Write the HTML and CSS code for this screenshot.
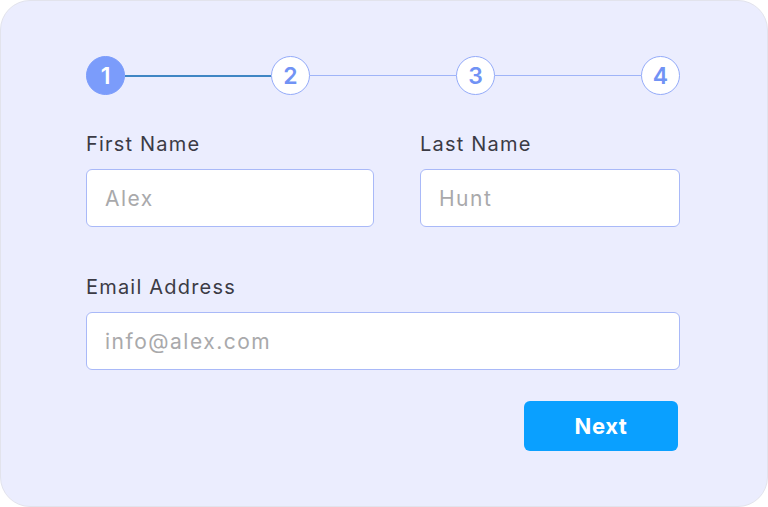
FILE: index.html
```html
<!DOCTYPE html>
<html>
<head>
<meta charset="utf-8">
<link rel="stylesheet" href="styles.css">
</head>
<body>
<div class="card">
  <div class="stepper">
    <div class="step active">1</div>
    <div class="line done"></div>
    <div class="step">2</div>
    <div class="line"></div>
    <div class="step">3</div>
    <div class="line"></div>
    <div class="step">4</div>
  </div>
  <div class="row">
    <div class="field">
      <label class="label">First Name</label>
      <div class="input">Alex</div>
    </div>
    <div class="field">
      <label class="label">Last Name</label>
      <div class="input">Hunt</div>
    </div>
  </div>
  <div class="field email">
    <label class="label">Email Address</label>
    <div class="input">info@alex.com</div>
  </div>
  <div class="actions">
    <button class="btn">Next</button>
  </div>
</div>
</body>
</html>
```
FILE: styles.css
```css
html, body {
  margin: 0;
  padding: 0;
  background: #ffffff;
}
body {
  width: 768px;
  height: 507px;
  font-family: Inter, "Open Sans", sans-serif;
}
.card {
  box-sizing: border-box;
  width: 768px;
  height: 507px;
  background: #ebedfe;
  border: 1px solid #e2e3ec;
  border-radius: 30px;
  padding: 55px 87px 0 85px;
}
.stepper {
  display: flex;
  align-items: center;
  height: 39px;
}
.step {
  box-sizing: border-box;
  width: 39px;
  height: 39px;
  border-radius: 50%;
  border: 1.5px solid #94abf9;
  background: #ffffff;
  color: #7193f5;
  font-size: 23px;
  font-weight: 600;
  display: flex;
  align-items: center;
  justify-content: center;
  flex: none;
}
.step.active {
  background: #7b9cfb;
  border-color: #7b9cfb;
  color: #ffffff;
}
.line {
  flex: 1;
  height: 1.5px;
  background: #9fb4f8;
}
.line.done {
  height: 2px;
  background: #3f86c4;
}
.row {
  display: grid;
  grid-template-columns: 288px 260px;
  column-gap: 46px;
  margin-top: 37px;
}
.field {
  display: flex;
  flex-direction: column;
}
.label {
  font-size: 20px;
  letter-spacing: 1.2px;
  line-height: 24px;
  color: #3b3b45;
  height: 24px;
  margin-bottom: 13px;
}
.input {
  box-sizing: border-box;
  height: 58px;
  background: #ffffff;
  border: 1.5px solid #a9b9f8;
  border-radius: 6px;
  padding-left: 18px;
  display: flex;
  align-items: center;
  font-size: 21px;
  letter-spacing: 1.5px;
  color: #a9a9ab;
}
.email {
  margin-top: 48px;
}
.actions {
  display: flex;
  justify-content: flex-end;
  margin-top: 31px;
  padding-right: 2px;
}
.btn {
  width: 154px;
  height: 50px;
  border: none;
  border-radius: 6px;
  background: #0aa0ff;
  color: #ffffff;
  font-family: Inter, sans-serif;
  font-size: 22px;
  letter-spacing: 0.6px;
  font-weight: 700;
}
```
